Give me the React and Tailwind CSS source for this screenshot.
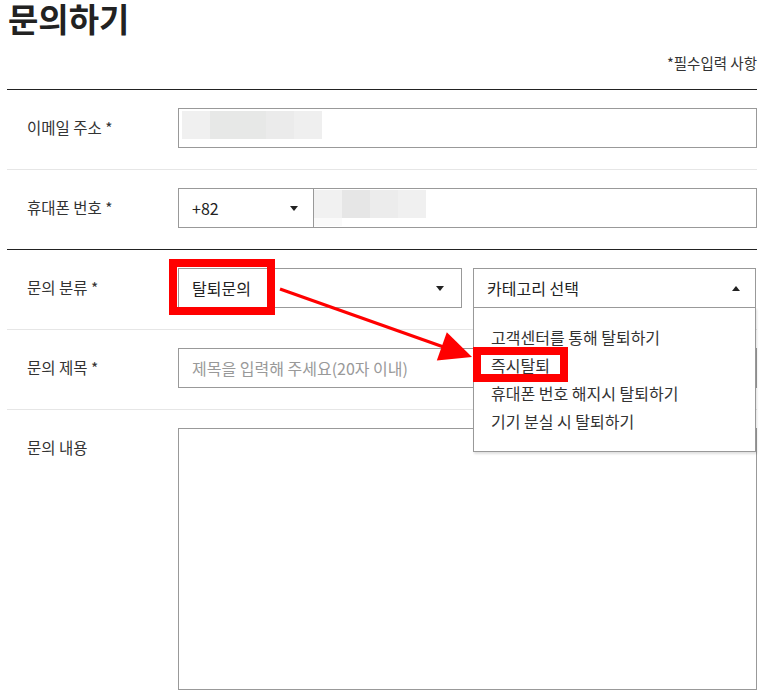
import React from "react";

function Down() {
  return (
    <svg width="8" height="5" viewBox="0 0 8 5" className="block shrink-0">
      <polygon points="0,0 8,0 4,5" fill="#222" />
    </svg>
  );
}
function Up() {
  return (
    <svg width="8" height="5" viewBox="0 0 8 5" className="block shrink-0">
      <polygon points="0,5 8,5 4,0" fill="#222" />
    </svg>
  );
}

function Row({ label, children, dark }) {
  return (
    <div
      className={`flex items-center pt-[18px] pb-[21px] border-b ${
        dark ? "border-[#222]" : "border-[#e6e6e6]"
      }`}
    >
      <div className="w-[171px] shrink-0 pl-5 h-10 flex items-center text-[15.5px] text-[#333]">
        {label}
      </div>
      <div className="flex-1 min-w-0">{children}</div>
    </div>
  );
}

export default function App() {
  const items = [
    "고객센터를 통해 탈퇴하기",
    "즉시탈퇴",
    "휴대폰 번호 해지시 탈퇴하기",
    "기기 분실 시 탈퇴하기",
  ];
  return (
    <div className="relative w-[765px] h-[696px] overflow-hidden bg-white text-[#333] font-['Noto_Sans_CJK_KR','Noto_Sans',sans-serif]">
      <div className="ml-[7px] w-[750px]">
        <h1 className="pl-px text-[33px] font-bold leading-[36px] text-[#222]">
          문의하기
        </h1>
        <p className="mt-[17px] text-right text-[14.5px] leading-[20px] text-[#333]">
          *필수입력 사항
        </p>
        <div className="mt-[16px] border-t border-[#222]">
          <Row label="이메일 주소 *">
            <div className="relative h-10 border border-[#999] bg-white">
              <div className="absolute left-[3px] top-[2px] flex h-[28px]">
                <div className="w-[28px] bg-[#f0f0f0]" />
                <div className="w-[56px] bg-[#e7e8e7]" />
                <div className="w-[28px] bg-[#ebebeb]" />
                <div className="w-[28px] bg-[#efefef]" />
              </div>
            </div>
          </Row>
          <Row label="휴대폰 번호 *" dark>
            <div className="flex h-10 border border-[#999] bg-white">
              <div className="w-[135px] shrink-0 flex items-center justify-between pl-[13px] pr-[15px] border-r border-[#999] text-[16px] text-[#222]">
                <span>+82</span>
                <Down />
              </div>
              <div className="flex-1 relative">
                <div className="absolute left-0 top-px flex h-[28px]">
                  <div className="w-[28px] bg-[#f1f1f1]" />
                  <div className="w-[28px] bg-[#e6e6e6]" />
                  <div className="w-[28px] bg-[#ececec]" />
                  <div className="w-[28px] bg-[#f0f0f0]" />
                </div>
                <div className="absolute left-0 top-[29px] h-[8px] w-[28px] bg-[#fafafa]" />
              </div>
            </div>
          </Row>
          <Row label="문의 분류 *">
            <div className="flex gap-[11px]">
              <div className="w-[284px] shrink-0 h-10 flex items-center justify-between pl-[13px] pr-[17px] border border-[#999] text-[16px] text-[#222]">
                <span>탈퇴문의</span>
                <Down />
              </div>
              <div className="w-[283px] shrink-0 relative">
                <div className="h-10 flex items-center justify-between pl-[13px] pr-[15px] border border-[#999] text-[16px] text-[#222]">
                  <span>카테고리 선택</span>
                  <Up />
                </div>
                <div className="absolute z-10 left-0 right-0 top-[39px] h-[145px] border border-[#999] bg-white py-[15px] pl-[17px] shadow-[1px_2px_2px_rgba(0,0,0,0.12)]">
                  {items.map((t) => (
                    <div key={t} className="h-7 flex items-center text-[16px] text-[#333]">
                      {t}
                    </div>
                  ))}
                </div>
              </div>
            </div>
          </Row>
          <Row label="문의 제목 *">
            <div className="h-10 flex items-center pl-[13px] border border-[#999] text-[16px] text-[#999]">
              제목을 입력해 주세요(20자 이내)
            </div>
          </Row>
          <div className="flex items-start pt-[18px]">
            <div className="w-[171px] shrink-0 pl-5 h-10 flex items-center text-[15.5px] text-[#333]">
              문의 내용
            </div>
            <div className="flex-1 h-[262px] border border-[#999]" />
          </div>
        </div>
      </div>

      <div className="absolute z-20 left-[169px] top-[259px] w-[106px] h-[56px] border-8 border-[#ff0000]" />
      <div className="absolute z-20 left-[473px] top-[347px] w-[95px] h-[35px] border-8 border-[#ff0000]" />
      <svg
        className="absolute z-30 left-0 top-0 pointer-events-none"
        width="765"
        height="696"
        viewBox="0 0 765 696"
      >
        <line x1="280" y1="289" x2="445" y2="347.5" stroke="#ff0000" strokeWidth="3.2" />
        <polygon points="472,357 446.8,332.2 436.8,360.4" fill="#ff0000" />
      </svg>
    </div>
  );
}
